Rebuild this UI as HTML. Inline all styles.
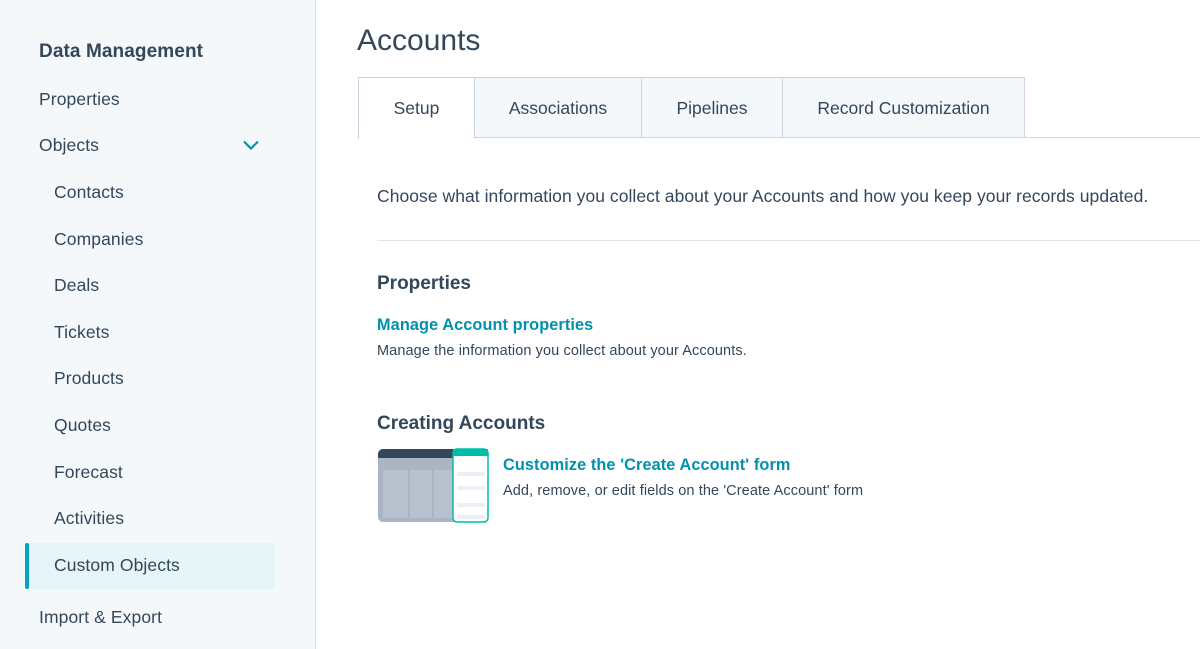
<!DOCTYPE html>
<html><head><style>
*{margin:0;padding:0;box-sizing:border-box}
body{width:1200px;height:649px;overflow:hidden;background:#fff;font-family:"Liberation Sans",sans-serif;color:#33475b;position:relative}
.sb{position:absolute;left:0;top:0;width:316px;height:649px;background:#f5f8fa;border-right:1px solid #dfe3eb}
.sb div{position:absolute;font-size:17.5px;white-space:nowrap;letter-spacing:0.1px}
.a{position:absolute;white-space:nowrap}
.tab{position:absolute;top:77px;height:61px;border:1px solid #cbd6e2;background:#f5f8fa;font-size:17.5px;text-align:center;line-height:60px}
</style></head><body>
<div class="sb">
<div style="left:39px;top:41px;font-size:19px;font-weight:bold">Data Management</div>
<div style="left:39px;top:89px">Properties</div>
<div style="left:39px;top:135px">Objects</div>
<svg style="position:absolute;left:243px;top:140px" width="16" height="10"><path d="M1 1.5L8 8.5L15 1.5" fill="none" stroke="#0091ae" stroke-width="2.2"/></svg>
<div style="left:54px;top:182px">Contacts</div>
<div style="left:54px;top:229px">Companies</div>
<div style="left:54px;top:275px">Deals</div>
<div style="left:54px;top:322px">Tickets</div>
<div style="left:54px;top:368px">Products</div>
<div style="left:54px;top:415px">Quotes</div>
<div style="left:54px;top:462px">Forecast</div>
<div style="left:54px;top:508px">Activities</div>
<span style="position:absolute;left:25px;top:543px;width:250px;height:46px;background:#e5f5f8;border-radius:3px"></span>
<span style="position:absolute;left:25px;top:543px;width:4px;height:46px;background:#00a4bd;border-radius:2px"></span>
<div style="left:54px;top:555px">Custom Objects</div>
<div style="left:39px;top:607px">Import &amp; Export</div>
</div>
<div class="a" style="left:357px;top:24px;font-size:30px;font-weight:300">Accounts</div>
<div style="position:absolute;left:474px;top:137px;width:726px;height:1px;background:#cbd6e2"></div>
<div class="tab" style="left:358px;width:117px;background:#fff;border-bottom:none;height:62px">Setup</div>
<div class="tab" style="left:474px;width:168px">Associations</div>
<div class="tab" style="left:641px;width:142px">Pipelines</div>
<div class="tab" style="left:782px;width:243px">Record Customization</div>
<div class="a" style="left:377px;top:186px;font-size:17.5px;letter-spacing:0.05px">Choose what information you collect about your Accounts and how you keep your records updated.</div>
<div style="position:absolute;left:377px;top:240px;width:823px;height:1px;background:#dfe3eb"></div>
<div class="a" style="left:377px;top:273px;font-size:19px;font-weight:bold">Properties</div>
<div class="a" style="left:377px;top:316px;font-size:16.3px;font-weight:bold;color:#0091ae;letter-spacing:0.1px">Manage Account properties</div>
<div class="a" style="left:377px;top:343px;font-size:14.5px;letter-spacing:0.1px">Manage the information you collect about your Accounts.</div>
<div class="a" style="left:377px;top:413px;font-size:19px;font-weight:bold">Creating Accounts</div>
<svg style="position:absolute;left:377px;top:448px" width="112" height="75">
<rect x="1" y="1" width="110" height="73" rx="5" fill="#aab5c2"/>
<path d="M6 1h70v9H1V6a5 5 0 0 1 5-5z" fill="#33475b"/>
<rect x="6" y="22" width="25" height="48" fill="#b8c2ce"/><rect x="33" y="22" width="22" height="48" fill="#b8c2ce"/><rect x="57" y="22" width="20" height="48" fill="#b8c2ce"/>
<rect x="76" y="1" width="35" height="73" rx="4" fill="#fff" stroke="#00bda5" stroke-width="1.5"/>
<rect x="76" y="1" width="35" height="7" fill="#00bda5"/>
<rect x="80" y="24" width="28" height="4" fill="#eaf0f6"/><rect x="80" y="38" width="28" height="4" fill="#eaf0f6"/><rect x="80" y="55" width="28" height="4" fill="#eaf0f6"/><rect x="80" y="67" width="28" height="4" fill="#eaf0f6"/>
</svg>
<div class="a" style="left:503px;top:456px;font-size:16.3px;font-weight:bold;color:#0091ae;letter-spacing:0.1px">Customize the 'Create Account' form</div>
<div class="a" style="left:503px;top:483px;font-size:14.5px;letter-spacing:0.1px">Add, remove, or edit fields on the 'Create Account' form</div>
</body></html>
